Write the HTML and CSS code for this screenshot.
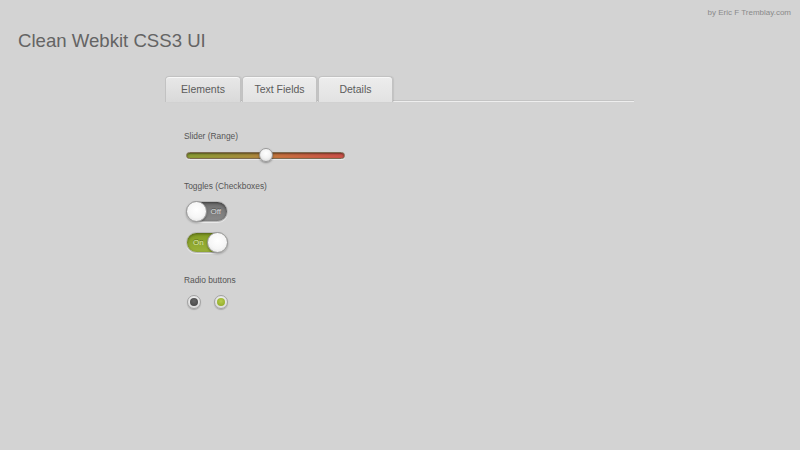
FILE: index.html
```html
<!DOCTYPE html>
<html>
<head>
<meta charset="utf-8">
<link rel="stylesheet" href="styles.css">
</head>
<body>
<header class="header">
  <div class="byline">by Eric F Tremblay.com</div>
  <h1 class="title">Clean Webkit CSS3 UI</h1>
</header>
<main class="panel">
  <nav class="tabs">
    <div class="tab tab-active">Elements</div>
    <div class="tab">Text Fields</div>
    <div class="tab">Details</div>
  </nav>
  <section class="content">
    <div class="label">Slider (Range)</div>
    <div class="slider">
      <div class="track"></div>
      <div class="thumb" style="left: 50%"></div>
    </div>

    <div class="label label-gap">Toggles (Checkboxes)</div>
    <div class="toggle toggle-off">
      <span class="knob"></span>
      <span class="toggle-text">Off</span>
    </div>
    <div class="toggle toggle-on">
      <span class="toggle-text">On</span>
      <span class="knob"></span>
    </div>

    <div class="label label-gap2">Radio buttons</div>
    <div class="radios">
      <span class="radio"><span class="dot dot-dark"></span></span>
      <span class="radio"><span class="dot dot-green"></span></span>
    </div>
  </section>
</main>
</body>
</html>
```

FILE: styles.css
```css
* { box-sizing: border-box; }
html, body {
  margin: 0;
  padding: 0;
  background: #d3d3d3;
  font-family: "Liberation Sans", Arial, sans-serif;
  width: 800px;
  height: 450px;
  overflow: hidden;
}
.header {
  display: flex;
  flex-direction: column;
  padding: 8px 9px 0 18px;
}
.byline {
  align-self: flex-end;
  font-size: 8px;
  line-height: 10px;
  color: #8a8a8a;
}
.title {
  margin: 12px 0 0 0;
  font-weight: normal;
  font-size: 18.6px;
  line-height: 21px;
  color: #646464;
}
.panel {
  margin: 25px 0 0 165px;
  width: 469px;
}
.tabs {
  display: flex;
  gap: 1px;
  height: 26px;
  border-bottom: 1px solid #eeeeee;
  box-shadow: 0 -1px 0 #c4c4c4 inset;
}
.tab {
  width: 75px;
  height: 26px;
  display: flex;
  align-items: center;
  justify-content: center;
  padding-bottom: 2px;
  font-size: 10.5px;
  color: #5c5c5c;
  border-radius: 4px 4px 0 0;
  background: linear-gradient(#ededed, #e2e2e2);
  border: 1px solid #c2c2c2;
  border-bottom: none;
  box-shadow: inset 0 1px 0 #f8f8f8, 1px 0 1px rgba(0,0,0,0.08);
}
.tab-active {
  width: 76px;
  background: linear-gradient(#e8e8e8, #d9d9d9);
}
.content {
  display: flex;
  flex-direction: column;
  align-items: flex-start;
  padding: 29px 0 0 19px;
}
.label {
  font-size: 8.4px;
  line-height: 10px;
  color: #555;
}
.label-gap { margin-top: 19px; }
.label-gap2 { margin-top: 22px; }
.slider {
  position: relative;
  margin-top: 7px;
  margin-left: 2px;
  width: 159px;
  height: 14px;
  display: flex;
  align-items: center;
}
.track {
  width: 100%;
  height: 7px;
  border-radius: 4px;
  background: linear-gradient(90deg, #8a9c34 0%, #a88c3c 40%, #c8703e 60%, #cc5048 100%);
  box-shadow: inset 0 1px 2px rgba(0,0,0,0.45), 0 1px 0 rgba(255,255,255,0.5);
  border: 1px solid #7d6a50;
}
.thumb {
  position: absolute;
  top: 0;
  width: 14px;
  height: 14px;
  margin-left: -7px;
  border-radius: 50%;
  background: radial-gradient(circle at 50% 35%, #ffffff 0%, #f2f2f2 50%, #d2d2d2 100%);
  border: 1px solid #9a9a9a;
  box-shadow: 0 1px 2px rgba(0,0,0,0.35);
}
.toggle {
  margin-top: 10px;
  margin-left: 2px;
  width: 42px;
  height: 21px;
  border-radius: 11px;
  display: flex;
  align-items: center;
  justify-content: space-between;
  border: 1px solid #b8b8b8;
}
.toggle-off {
  background: linear-gradient(#6e6e6e, #8a8a8a);
  box-shadow: inset 0 1px 3px rgba(0,0,0,0.5), 0 1px 0 rgba(255,255,255,0.5);
}
.toggle-on {
  background: linear-gradient(#829c22, #9bb23a);
  box-shadow: inset 0 1px 3px rgba(0,0,0,0.4), 0 1px 0 rgba(255,255,255,0.5);
}
.knob {
  width: 21px;
  height: 21px;
  margin: -1px;
  border-radius: 50%;
  background: radial-gradient(circle at 50% 40%, #ffffff 0%, #f6f6f6 55%, #dcdcdc 100%);
  border: 1px solid #9a9a9a;
  box-shadow: 0 1px 2px rgba(0,0,0,0.35);
  flex: none;
}
.toggle-text {
  font-size: 8px;
  color: #d8d8d8;
  text-shadow: 0 -1px 0 rgba(0,0,0,0.3);
}
.toggle-off .toggle-text { margin-right: 6px; }
.toggle-on .toggle-text { margin-left: 6px; color: #dbe6b0; }
.radios {
  display: flex;
  gap: 13px;
  margin-top: 10px;
  margin-left: 3px;
}
.radio {
  width: 14px;
  height: 14px;
  border-radius: 50%;
  background: radial-gradient(circle at 50% 40%, #fafafa, #d0d0d0);
  border: 1px solid #a2a2a2;
  display: flex;
  align-items: center;
  justify-content: center;
  box-shadow: 0 1px 1px rgba(0,0,0,0.2);
}
.dot {
  width: 8px;
  height: 8px;
  border-radius: 50%;
}
.dot-dark {
  background: radial-gradient(circle at 50% 40%, #666, #3f3f3f);
}
.dot-green {
  background: radial-gradient(circle at 50% 40%, #b6cc4c, #8aa424);
}
```
